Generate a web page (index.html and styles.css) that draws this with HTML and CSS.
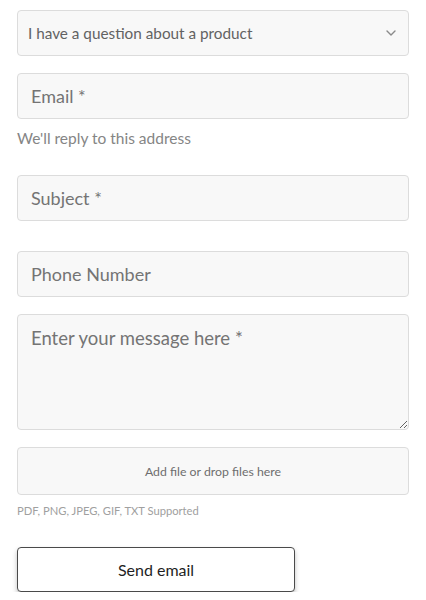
FILE: index.html
```html
<!DOCTYPE html>
<html lang="en">
<head>
<meta charset="utf-8">
<title>Contact form</title>
<link rel="stylesheet" href="styles.css">
</head>
<body>
<form class="form">
  <div class="select-wrap">
    <select class="field select">
      <option>I have a question about a product</option>
    </select>
    <svg class="chevron" width="10" height="6" viewBox="0 0 10 6" aria-hidden="true"><path d="M1 1l4 4 4-4" fill="none" stroke="#8a8a8a" stroke-width="1.4" stroke-linecap="round" stroke-linejoin="round"/></svg>
  </div>
  <input class="field input email" type="email" placeholder="Email *">
  <p class="helper">We'll reply to this address</p>
  <input class="field input subject" type="text" placeholder="Subject *">
  <input class="field input phone" type="tel" placeholder="Phone Number">
  <textarea class="field textarea" placeholder="Enter your message here *"></textarea>
  <div class="field dropzone">Add file or drop files here</div>
  <p class="note">PDF, PNG, JPEG, GIF, TXT Supported</p>
  <button type="button" class="send">Send email</button>
</form>
</body>
</html>
```
FILE: styles.css
```css
* { box-sizing: border-box; }
html, body { margin: 0; background: #fff; }
body { font-family: Lato, "Open Sans", Arial, sans-serif; }

.form {
  display: flex;
  flex-direction: column;
  align-items: flex-start;
  padding: 10px 17px 0 17px;
  width: 426px;
}

.field {
  width: 392px;
  margin: 0;
  background: #f8f8f8;
  border: 1px solid #dcdcdc;
  border-radius: 4px;
  font-family: inherit;
  outline: none;
}

.select-wrap { position: relative; width: 392px; }
.select {
  -webkit-appearance: none;
  appearance: none;
  height: 46px;
  padding: 0 30px 0 10px;
  font-size: 15.3px;
  color: #626262;
  display: block;
}
.chevron {
  position: absolute;
  right: 13px;
  top: 20px;
  pointer-events: none;
}

.input {
  height: 46px;
  padding: 0 13px;
  font-size: 18px;
  color: #333;
}
.input::placeholder, .textarea::placeholder { color: #747474; opacity: 1; }

.email { margin-top: 17px; }
.helper {
  margin: 9px 0 0;
  font-size: 15.5px;
  line-height: 20px;
  color: #858585;
}
.subject { margin-top: 27px; }
.phone { margin-top: 30px; }

.textarea {
  margin-top: 17px;
  height: 116px;
  padding: 11px 13px;
  font-size: 18.5px;
  line-height: 24px;
  color: #333;
  resize: vertical;
}

.dropzone {
  margin-top: 17px;
  height: 48px;
  display: flex;
  align-items: center;
  justify-content: center;
  font-size: 12.3px;
  color: #6e6e6e;
}

.note {
  margin: 8px 0 0;
  font-size: 11.2px;
  line-height: 16px;
  color: #a0a0a0;
}

.send {
  margin-top: 28px;
  width: 278px;
  height: 45px;
  background: #fff;
  border: 1px solid #4a4a4a;
  border-radius: 4px;
  box-shadow: 0 3px 5px rgba(0,0,0,0.25);
  font-family: inherit;
  font-size: 16px;
  color: #1f1f1f;
  cursor: pointer;
}
```
